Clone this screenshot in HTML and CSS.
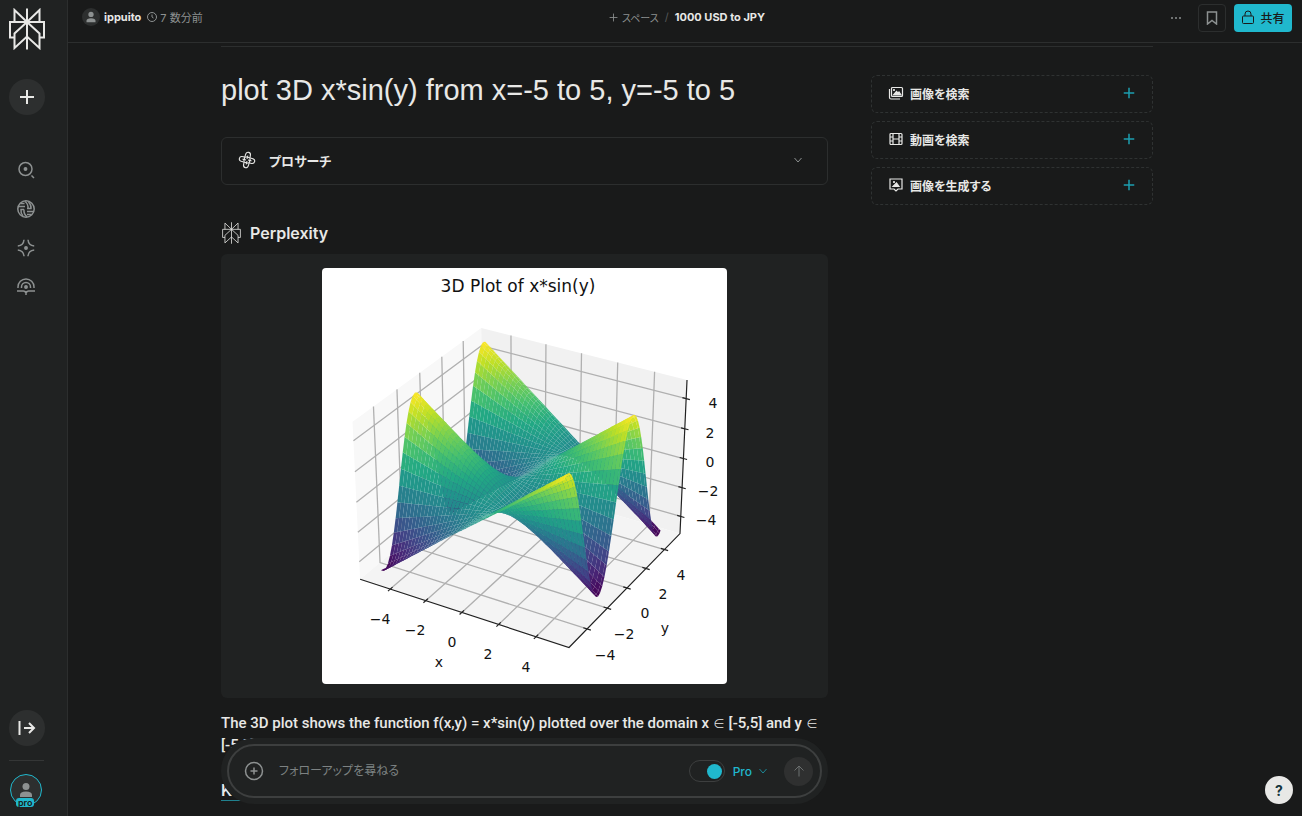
FILE: index.html
```html
<!DOCTYPE html>
<html lang="ja">
<head>
  <meta charset="UTF-8">
  <meta name="viewport" content="width=device-width, initial-scale=1.0">
  <title>1000 USD to JPY</title>
  <link rel="stylesheet" href="styles.css">
</head>
<body>
  <svg class="defs" aria-hidden="true">
    <symbol id="logo" viewBox="0 0 36 42">
      <path d="M18 0.5V41.5M18 14L5.500 2V14M18 14L30.500 2V14M18 14L5.500 25.500V40L18 28.500L30.500 40V25.500L18 14M5.500 29.500H1V14H35V29.500H30.500"/>
    </symbol>
    <symbol id="plus" viewBox="0 0 16 16"><path d="M8 1V15M1 8H15"/></symbol>
    <symbol id="chevron" viewBox="0 0 10 10"><path d="M1.500 3L5 7L8.500 3"/></symbol>
    <symbol id="user" viewBox="0 0 16 16"><circle cx="8" cy="4.500" r="3.500"/><path d="M2 15V13Q2 9.500 8 9.500T14 13V15Z"/></symbol>
  </svg>

  <div class="app">
    <aside class="sidebar">
      <a href="#" class="logo" aria-label="Perplexity"><svg class="line"><use href="#logo"/></svg></a>
      <button class="round" aria-label="New thread"><svg class="line"><use href="#plus"/></svg></button>
      <nav class="side-nav">
        <a href="#" aria-label="Home">
          <svg class="line" viewBox="0 0 20 20"><circle cx="9.500" cy="9" r="6.500"/><circle class="solid" cx="9.500" cy="9" r="1.200"/><path d="M15.500 15.500L18 18"/></svg>
        </a>
        <a href="#" aria-label="Discover">
          <svg class="line" viewBox="0 0 20 20"><circle cx="10" cy="10" r="8.200"/><path d="M2.500 7.500H9M4.500 4.500H8.500M9 2.500Q12.500 5 12 10M12.500 3Q15.500 6 15 9.500H11M11 12.500H17.500M11 15.500H15.500M8 10.500Q7.500 15 11 17.800M8 10.500H5Q4.500 14 7 17"/></svg>
        </a>
        <a href="#" aria-label="Spaces">
          <svg class="line" viewBox="0 0 20 20"><circle class="solid" cx="10" cy="10" r="1.200"/><path d="M8 1.800Q7.500 7.500 1.800 8M12 1.800Q12.500 7.500 18.200 8M8 18.200Q7.500 12.500 1.800 12M12 18.200Q12.500 12.500 18.200 12"/></svg>
        </a>
        <a href="#" aria-label="Library">
          <svg class="line" viewBox="0 0 20 20"><circle class="solid" cx="10" cy="10" r="1.200"/><path d="M2 11V10A8 8 0 0 1 18 10V11M5.500 11V10A4.500 4.500 0 0 1 14.500 10V11M1 14H7.500Q9 14 10 16Q11 14 12.500 14H19M10 14V18"/></svg>
        </a>
      </nav>
      <button class="round expand" aria-label="Expand sidebar">
        <svg class="line" viewBox="0 0 18 16"><path d="M1.500 1V15M6 8H16M11 3L16 8L11 13"/></svg>
      </button>
      <hr class="side-rule">
      <a href="#" class="account" aria-label="Account">
        <svg><use href="#user"/></svg>
        <span class="badge">pro</span>
      </a>
    </aside>

    <div class="page">
      <header class="topbar">
        <div class="author">
          <span class="avatar"><svg><use href="#user"/></svg></span>
          <a href="#">ippuito</a>
          <svg class="line clock" viewBox="0 0 12 12"><circle cx="6" cy="6" r="4.500"/><path d="M6 3.500V6L7.500 7"/></svg>
          <span class="muted">7 数分前</span>
        </div>
        <div class="crumbs">
          <button class="space"><svg class="line"><use href="#plus"/></svg>スペース</button>
          <span class="slash">/</span>
          <strong>1000 USD to JPY</strong>
        </div>
        <div class="actions">
          <button class="more" aria-label="More"><svg viewBox="0 0 12 4"><circle cx="2" cy="2" r="1"/><circle cx="6" cy="2" r="1"/><circle cx="10" cy="2" r="1"/></svg></button>
          <button class="bookmark" aria-label="Bookmark"><svg class="line" viewBox="0 0 12 14"><path d="M1.500 1H10.500V13L6 9.500L1.500 13Z"/></svg></button>
          <button class="share"><svg class="line" viewBox="0 0 14 16"><rect x="1.500" y="7" width="11" height="7.500" rx="1"/><path d="M4 7V5A3 3 0 0 1 10 5V7"/></svg>共有</button>
        </div>
      </header>

      <main class="thread">
        <div class="answer">
          <h1>plot 3D x*sin(y) from x=-5 to 5, y=-5 to 5</h1>
          <button class="pro-search">
            <svg class="line swirl" viewBox="0 0 18 18"><g transform="rotate(15 9 9)"><path id="arm" d="M6.200 11V4.500Q6.200 1.200 8.700 1.200Q11.200 1.200 11.200 4.500V7M8.700 8V4.500"/><use href="#arm" transform="rotate(90 9 9)"/><use href="#arm" transform="rotate(180 9 9)"/><use href="#arm" transform="rotate(270 9 9)"/></g></svg>
            <span>プロサーチ</span>
            <svg class="line chevron"><use href="#chevron"/></svg>
          </button>
          <h2><svg class="line"><use href="#logo"/></svg>Perplexity</h2>
          <figure class="plot-card">
            <svg id="plot" class="plot" viewBox="0 0 405 416" role="img" aria-label="3D Plot of x*sin(y)"></svg>
          </figure>
          <p>The 3D plot shows the function f(x,y) = x*sin(y) plotted over the domain x ∈ [-5,5] and y ∈ [-5,5].</p>
          <h3><a href="#">Key features</a></h3>
          <ul>
            <li>The surface exhibits an oscillating pattern that varies in amplitude based on the x and y values</li>
          </ul>
        </div>
        <aside class="tools">
          <button>
            <svg class="line" viewBox="0 0 16 16"><rect x="3.500" y="2.500" width="11" height="9" rx="1"/><path d="M1.500 4V12.500Q1.500 14 3 14H12"/><path class="solid" d="M5.500 10L8.500 6.500L10 8L11 7L13 10Z"/><circle class="solid" cx="6" cy="5" r="0.500"/></svg>
            <span>画像を検索</span><svg class="line add"><use href="#plus"/></svg>
          </button>
          <button>
            <svg class="line" viewBox="0 0 16 16"><rect x="2" y="2.500" width="12" height="11" rx="1"/><path d="M5 2.500V13.500M11 2.500V13.500M5 8H11M2 6H5M2 10H5M11 6H14M11 10H14"/></svg>
            <span>動画を検索</span><svg class="line add"><use href="#plus"/></svg>
          </button>
          <button>
            <svg class="line" viewBox="0 0 16 16"><path d="M2 2H14V12H10L8 14L6 12H2Z"/><path class="solid" d="M5 9.500L8.500 6L11 9.500Z"/><circle class="solid" cx="6" cy="5" r="0.500"/></svg>
            <span>画像を生成する</span><svg class="line add"><use href="#plus"/></svg>
          </button>
        </aside>
      </main>

      <div class="ask-wrap">
        <form class="ask">
          <button type="button" class="attach" aria-label="Attach"><svg class="line" viewBox="0 0 20 20"><circle cx="10" cy="10" r="8.500"/><path d="M10 6.500V13.500M6.500 10H13.500"/></svg></button>
          <input type="text" class="question" placeholder="フォローアップを尋ねる" aria-label="フォローアップを尋ねる">
          <input type="checkbox" class="switch" id="pro" checked>
          <label for="pro">Pro</label>
          <svg class="line chevron"><use href="#chevron"/></svg>
          <button type="submit" class="send" aria-label="Send"><svg class="line" viewBox="0 0 12 12"><path d="M6 11.500V1M1.500 5.500L6 1L10.500 5.500"/></svg></button>
        </form>
      </div>
      <button class="help" aria-label="Help">?</button>
    </div>
  </div>
  <script src="plot.js"></script>
</body>
</html>
```
FILE: styles.css
```css
* {
  box-sizing: border-box;
}

body {
  margin: 0;
  background: #191a1a;
  color: #e8e8e6;
  font-family: Inter, "Noto Sans CJK JP", sans-serif;
  font-size: 14px;
  font-feature-settings: "palt";
}

button,
input {
  font: inherit;
  font-feature-settings: inherit;
  color: inherit;
}

button {
  display: flex;
  align-items: center;
  justify-content: center;
  padding: 0;
  border: none;
  background: none;
  cursor: pointer;
}

a {
  color: inherit;
  text-decoration: none;
}

svg {
  flex: none;
  fill: currentColor;
}

.line {
  fill: none;
  stroke: currentColor;
  stroke-width: 1.5;
}

.solid {
  fill: currentColor;
}

.defs {
  position: absolute;
  width: 0;
  height: 0;
}

.app {
  display: flex;
  height: 100vh;
  overflow: hidden;
}

/* sidebar */
.sidebar {
  display: flex;
  flex-direction: column;
  align-items: flex-start;
  flex: none;
  width: 68px;
  padding: 8px 9px;
  background: #202222;
  border-right: 1px solid #2c2e2e;
}

.logo svg {
  display: block;
  width: 36px;
  height: 42px;
  stroke-width: 2;
}

.round {
  width: 36px;
  height: 36px;
  border-radius: 50%;
  background: #2d2f2f;
}

.round svg {
  width: 16px;
  height: 16px;
  stroke-width: 2;
}

.logo + .round {
  margin-top: 29px;
}

.side-nav {
  display: flex;
  flex-direction: column;
  gap: 19px;
  margin: 45px 0 auto 7px;
  color: #8d9191;
}

.side-nav svg {
  display: block;
  width: 20px;
  height: 20px;
}

.expand svg {
  width: 18px;
}

.side-rule {
  width: 35px;
  margin: 14px 0 13px;
  border: 0;
  border-top: 1px solid #343636;
}

.account {
  position: relative;
  display: flex;
  align-items: center;
  justify-content: center;
  width: 32px;
  height: 32px;
  margin: 0 0 2px 1px;
  border: 1px solid #20b8cd;
  border-radius: 50%;
  background: #2d2f2f;
  color: #8d9191;
}

.account svg {
  width: 16px;
  height: 16px;
}

.badge {
  position: absolute;
  bottom: -2px;
  left: 5px;
  padding: 0 2px;
  border-radius: 3px;
  background: #20b8cd;
  color: #191a1a;
  font-size: 9px;
  font-weight: 600;
  line-height: 9px;
}

/* top bar */
.page {
  position: relative;
  display: flex;
  flex-direction: column;
  flex: 1;
  min-width: 0;
}

.topbar {
  display: grid;
  grid-template-columns: 1fr auto 1fr;
  align-items: start;
  flex: none;
  height: 43px;
  padding: 4px 10px 0 14px;
  border-bottom: 1px solid #2c2e2e;
  font-size: 11px;
}

.author,
.crumbs {
  display: flex;
  align-items: center;
  height: 26px;
}

.author a,
.crumbs strong {
  font-weight: 700;
}

.avatar {
  display: flex;
  align-items: center;
  justify-content: center;
  width: 18px;
  height: 18px;
  margin-right: 4px;
  border-radius: 50%;
  background: #2d2f2f;
  color: #8d9191;
}

.avatar svg {
  width: 12px;
  height: 12px;
}

.clock {
  width: 12px;
  height: 12px;
  margin: 0 2px 0 5px;
  stroke-width: 1;
  color: #8d9191;
}

.muted,
.space {
  color: #8d9191;
}

.space {
  gap: 4px;
  font-size: 10px;
}

.space svg {
  width: 9px;
  height: 9px;
}

.slash {
  margin: 0 6px;
  color: #565959;
}

.actions {
  display: flex;
  justify-content: flex-end;
  gap: 8px;
}

.actions button {
  height: 28px;
  border-radius: 4px;
}

.more {
  width: 28px;
  color: #8d9191;
}

.more svg {
  width: 12px;
  height: 4px;
}

.actions .bookmark {
  width: 28px;
  border: 1px solid #2c2e2e;
  color: #8d9191;
}

.bookmark svg {
  width: 12px;
  height: 14px;
}

.actions .share {
  gap: 5px;
  width: 58px;
  padding-bottom: 2px;
  background: #20b8cd;
  color: #191a1a;
  font-size: 12px;
  font-weight: 500;
}

.share svg {
  width: 14px;
  height: 16px;
  stroke-width: 1;
}

/* thread */
.thread {
  display: grid;
  grid-template-columns: minmax(0, 607px) 282px;
  column-gap: 43px;
  justify-content: center;
  align-items: start;
  width: 936px;
  max-width: 100%;
  margin: 3px auto 0;
  padding-left: 4px;
  min-height: 0;
  overflow: hidden;
}

.thread::before {
  content: "";
  grid-column: 1 / -1;
  height: 1px;
  background: #2c2e2e;
}

h1 {
  margin: 25px 0 29px;
  font-family: "Liberation Sans", sans-serif;
  font-size: 29px;
  font-weight: 400;
  line-height: 36px;
}

.pro-search {
  width: 100%;
  height: 48px;
  padding: 0 24px 2px 16px;
  border: 1px solid #2c2e2e;
  border-radius: 6px;
}

.pro-search span {
  flex: 1;
  margin-left: 13px;
  font-size: 13px;
  font-weight: 600;
  text-align: left;
}

.swirl {
  width: 18px;
  height: 18px;
  stroke-width: 1.1;
}

.chevron {
  width: 10px;
  height: 10px;
  stroke-width: 1;
  color: #8d9191;
}

h2 {
  display: flex;
  align-items: center;
  gap: 9px;
  margin: 36px 0 9px;
  padding-left: 1px;
  font-size: 16px;
  font-weight: 600;
  line-height: 24px;
}

h2 svg {
  width: 19px;
  height: 22px;
  stroke-width: 3;
}

.plot-card {
  display: flex;
  justify-content: center;
  margin: 0 0 14px;
  padding: 14px;
  border-radius: 6px;
  background: #202222;
}

.plot {
  width: 405px;
  max-width: 100%;
  border-radius: 4px;
  background: #fff;
}

.plot text {
  fill: #111;
  font-family: "DejaVu Sans", sans-serif;
  font-size: 14px;
  text-anchor: middle;
}

.plot .title {
  font-size: 17px;
}

.grid-line {
  fill: none;
  stroke: #b0b0b0;
  stroke-width: 1.3;
}

.axis {
  fill: none;
  stroke: #222;
  stroke-width: 1.2;
}

.answer p,
.answer ul {
  margin: 0;
  font-family: Roboto, "Liberation Sans", sans-serif;
  font-size: 15px;
  font-weight: 500;
  line-height: 22px;
}

h3 {
  margin: 22px 0 10px;
  font-size: 16px;
  font-weight: 600;
  line-height: 24px;
}

h3 a {
  border-bottom: 1px solid #20808d;
}

.answer ul {
  padding-left: 34px;
  list-style: none;
}

.tools {
  display: grid;
  gap: 8px;
  margin-top: 28px;
}

.tools button {
  height: 38px;
  padding: 0 17px 2px 16px;
  border: 1px dashed #2f3232;
  border-radius: 6px;
  font-size: 12px;
  font-weight: 600;
}

.tools svg {
  width: 16px;
  height: 16px;
  stroke-width: 1.2;
}

.tools span {
  flex: 1;
  margin-left: 6px;
  text-align: left;
}

.tools .add {
  width: 12px;
  height: 12px;
  stroke-width: 2;
  color: #1c9eb0;
}

/* follow-up box floats over the answer */
.ask-wrap {
  position: absolute;
  bottom: 18px;
  left: 50%;
  display: grid;
  grid-template-columns: minmax(0, 607px) 282px;
  column-gap: 43px;
  justify-content: center;
  width: 936px;
  max-width: 100%;
  padding-left: 4px;
  transform: translateX(-50%);
  pointer-events: none;
}

.ask {
  display: flex;
  align-items: center;
  height: 54px;
  margin: 0 6px;
  padding: 0 7px 0 15px;
  border: 2px solid #3d3f3f;
  border-radius: 27px;
  background: #202222;
  box-shadow: 0 0 0 6px #202222;
  pointer-events: auto;
}

.attach svg {
  width: 20px;
  height: 20px;
  color: #8d9191;
}

.question {
  flex: 1;
  min-width: 0;
  margin-left: 15px;
  padding: 0 0 2px;
  border: none;
  outline: none;
  background: none;
  font-size: 12px;
}

.question::placeholder {
  color: #7d8282;
}

.switch {
  display: flex;
  align-items: center;
  justify-content: flex-end;
  width: 36px;
  height: 22px;
  margin: 0 8px 0 0;
  padding: 0 2px;
  border: 1px solid #3d3f3f;
  border-radius: 11px;
  appearance: none;
}

.switch::before {
  content: "";
  width: 15px;
  height: 15px;
  border-radius: 50%;
  background: #20b8cd;
}

.ask label {
  color: #20b8cd;
  font-size: 12px;
  font-weight: 500;
}

.ask .chevron {
  margin: 0 16px 0 6px;
  color: #1c8997;
}

.send {
  width: 29px;
  height: 29px;
  border-radius: 50%;
  background: #2f3030;
  color: #6c7070;
}

.send svg {
  width: 12px;
  height: 12px;
  stroke-width: 1;
}

.help {
  position: absolute;
  right: 9px;
  bottom: 12px;
  width: 28px;
  height: 28px;
  border-radius: 50%;
  background: #e8e8e6;
  color: #13343b;
  font-weight: 700;
}
```
FILE: plot.js
```js
const plot = document.getElementById('plot');
const XY = 5.73; // axis limit for x and y
const Z = 5.21;
const rad = Math.PI / 180;
const elev = 30 * rad;
const azim = -60 * rad;

// viridis, sampled every 1/10
const viridis = [
  [68, 1, 84], [72, 36, 117], [65, 68, 135], [53, 95, 141], [42, 120, 142], [33, 145, 140],
  [34, 168, 132], [68, 191, 112], [122, 209, 81], [189, 223, 38], [253, 231, 37]
];

function color(t) {
  const p = Math.min(Math.max(t, 0), 1) * 10;
  const i = Math.min(Math.floor(p), 9);
  const c = viridis[i].map((v, k) => Math.round(v + (viridis[i + 1][k] - v) * (p - i)));
  return `rgb(${c})`;
}

// perspective camera at distance 10, box proportions 4:4:3
function project(x, y, z) {
  const a = x / XY * 0.5953;
  const b = y / XY * 0.5953;
  const c = z / Z * 0.4464;
  const u = -Math.sin(azim) * a + Math.cos(azim) * b;
  const v = -Math.sin(elev) * (Math.cos(azim) * a + Math.sin(azim) * b) + Math.cos(elev) * c;
  const d = 10 - (Math.cos(elev) * (Math.cos(azim) * a + Math.sin(azim) * b) + Math.sin(elev) * c);
  return [201 + 2010 * u / d, 212 - 2010 * v / d, d];
}

function path(points) {
  return 'M' + points.map(p => project(...p).slice(0, 2).map(n => n.toFixed(2)).join(' ')).join('L');
}

function line(points, cls) {
  return `<path class="${cls}" d="${path(points)}"/>`;
}

function pane(points, fill) {
  return `<path fill="${fill}" d="${path(points)}Z"/>`;
}

let out = '';
out += pane([[-XY, -XY, -Z], [-XY, XY, -Z], [-XY, XY, Z], [-XY, -XY, Z]], '#f8f8f8');
out += pane([[-XY, XY, -Z], [XY, XY, -Z], [XY, XY, Z], [-XY, XY, Z]], '#f1f1f1');
out += pane([[-XY, -XY, -Z], [XY, -XY, -Z], [XY, XY, -Z], [-XY, XY, -Z]], '#f4f4f4');

const ticks = [-4, -2, 0, 2, 4];
ticks.forEach(t => {
  out += line([[t, -XY, -Z], [t, XY, -Z], [t, XY, Z]], 'grid-line');
  out += line([[XY, t, -Z], [-XY, t, -Z], [-XY, t, Z]], 'grid-line');
  out += line([[-XY, -XY, t], [-XY, XY, t], [XY, XY, t]], 'grid-line');
});

out += line([[-XY, -XY, -Z], [XY, -XY, -Z], [XY, XY, -Z], [XY, XY, Z]], 'axis');
ticks.forEach(t => {
  out += line([[t, -XY - 0.2, -Z], [t, -XY + 0.2, -Z]], 'axis');
  out += line([[XY - 0.2, t, -Z], [XY + 0.2, t, -Z]], 'axis');
  out += line([[XY - 0.2, XY, t], [XY + 0.2, XY, t]], 'axis');
});

// 100 samples per side, every second one kept
const samples = [];
for (let i = 0; i < 99; i += 2) samples.push(-5 + i * 10 / 99);
samples.push(5);

const faces = [];
for (let i = 0; i < samples.length - 1; i++) {
  for (let j = 0; j < samples.length - 1; j++) {
    const corners = [[i, j], [i + 1, j], [i + 1, j + 1], [i, j + 1]]
      .map(([m, n]) => [samples[m], samples[n], samples[m] * Math.sin(samples[n])]);
    const mean = corners.reduce((s, c) => s + c[2], 0) / 4;
    const depth = corners.reduce((s, c) => s + project(...c)[2], 0);
    faces.push({ corners, depth, fill: color((mean + 4.95) / 9.9) });
  }
}
faces.sort((a, b) => b.depth - a.depth);
faces.forEach(f => { out += pane(f.corners, f.fill); });

const labels = [
  ['−4', 58, 356], ['−2', 93, 367], ['0', 130, 379], ['2', 166, 391], ['4', 204, 404],
  ['−4', 283, 392], ['−2', 302, 371], ['0', 323, 350], ['2', 341, 331], ['4', 359, 312],
  ['−4', 384, 257], ['−2', 386, 228], ['0', 388, 199], ['2', 388, 170], ['4', 391, 140],
  ['x', 117, 399], ['y', 343, 365]
];
labels.forEach(([t, x, y]) => { out += `<text x="${x}" y="${y}">${t}</text>`; });
out += '<text class="title" x="196" y="24">3D Plot of x*sin(y)</text>';

plot.innerHTML = out;
```
